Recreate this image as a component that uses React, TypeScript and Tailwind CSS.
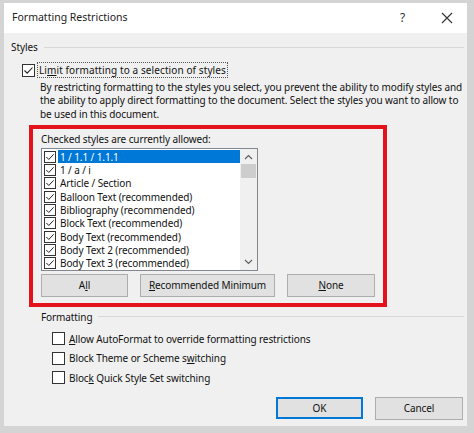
import React from "react";

const font = { fontFamily: '"Noto Sans", "Segoe UI", sans-serif' };

const styles = [
  "1 / 1.1 / 1.1.1",
  "1 / a / i",
  "Article / Section",
  "Balloon Text (recommended)",
  "Bibliography (recommended)",
  "Block Text (recommended)",
  "Body Text (recommended)",
  "Body Text 2 (recommended)",
  "Body Text 3 (recommended)",
];

function Check({ checked, size = 13 }: { checked?: boolean; size?: number }) {
  return (
    <span
      className="flex shrink-0 items-center justify-center border border-[#333] bg-white"
      style={{ width: size, height: size }}
    >
      {checked && (
        <svg width={size - 2} height={size - 2} viewBox="0 0 11 11">
          <path d="M1.5 5.5 L4.2 8.2 L9.5 2.5" fill="none" stroke="#222" strokeWidth="1.1" />
        </svg>
      )}
    </span>
  );
}

function Btn({ children, w, primary }: { children: React.ReactNode; w: number; primary?: boolean }) {
  return (
    <div
      className={`flex items-center justify-center bg-[#e1e1e1] text-[#111] ${
        primary ? "h-[22px] border-2 border-[#0078d7]" : "h-[23px] border border-[#adadad]"
      }`}
      style={{ width: w }}
    >
      {children}
    </div>
  );
}

export default function App() {
  return (
    <div className="h-[433px] w-[474px] bg-[#d4d4d4] pl-[4px] pr-[7px] pt-[3px] pb-[7px]" style={font}>
      <div className="flex h-full flex-col bg-[#f0f0f0] text-[10px] tracking-[-0.1px] text-[#111]">
        {/* title bar */}
        <div className="flex h-[30px] shrink-0 items-center bg-white pl-[8px] pr-[14px]">
          <span className="text-[10.5px] tracking-normal text-[#222]">Formatting Restrictions</span>
          <span className="ml-auto mr-[36px] text-[12px] text-[#333]">?</span>
          <svg width="12" height="12" viewBox="0 0 12 12">
            <path d="M1 1 L11 11 M11 1 L1 11" stroke="#333" strokeWidth="1.1" />
          </svg>
        </div>

        {/* Styles group */}
        <div className="mt-[7px] flex h-[14px] items-center pl-[7px] pr-[3px]">
          <span className="leading-none">Styles</span>
          <div className="ml-[6px] h-px flex-1 bg-[#d8d8d8]" />
        </div>

        <div className="ml-[18px] mt-[8px] flex h-[16px] items-center">
          <Check checked />
          <span className="ml-[2px] flex h-[16px] items-center border border-dotted border-[#555] px-[1px] leading-none tracking-[0.1px]">
            <span>
              Li<span className="underline">m</span>it formatting to a selection of styles
            </span>
          </span>
        </div>

        <div className="ml-[36px] mt-[3px] whitespace-nowrap leading-[13.33px]">
          <div>By restricting formatting to the styles you select, you prevent the ability to modify styles and</div>
          <div>the ability to apply direct formatting to the document. Select the styles you want to allow to</div>
          <div>be used in this document.</div>
        </div>

        {/* red highlight */}
        <div className="ml-[25px] mt-[4px] w-[358px] border-4 border-[#e3121b] pl-[8px] pr-[8px] pt-[3px] pb-[6px]">
          <div className="flex h-[14px] items-center leading-none">Checked styles are currently allowed:</div>
          <div className="mt-[2px] flex h-[123px] w-[217px] border border-[#828790] bg-white">
            <div className="flex flex-1 flex-col pt-[1px] pl-[2px]">
              {styles.map((s, i) => (
                <div key={s} className="flex h-[13.33px] items-center">
                  <Check checked size={12} />
                  <span
                    className={`ml-[2px] flex h-full flex-1 items-center pl-[2px] leading-none ${
                      i === 0 ? "bg-[#0078d7] text-white" : ""
                    }`}
                  >
                    {s}
                  </span>
                </div>
              ))}
            </div>
            <div className="flex w-[17px] flex-col items-center bg-[#f0f0f0]">
              <svg className="mt-[5px]" width="9" height="6" viewBox="0 0 9 6">
                <path d="M1 5 L4.5 1.5 L8 5" fill="none" stroke="#606060" strokeWidth="1.2" />
              </svg>
              <div className="mt-[4px] h-[14px] w-[15px] bg-[#cdcdcd]" />
              <svg className="mt-auto mb-[5px]" width="9" height="6" viewBox="0 0 9 6">
                <path d="M1 1 L4.5 4.5 L8 1" fill="none" stroke="#606060" strokeWidth="1.2" />
              </svg>
            </div>
          </div>
          <div className="mt-[3px] flex gap-[12px]">
            <Btn w={87}>
              <span>
                A<span className="underline">l</span>l
              </span>
            </Btn>
            <Btn w={135}>
              <span>
                <span className="underline">R</span>ecommended Minimum
              </span>
            </Btn>
            <Btn w={88}>
              <span>
                <span className="underline">N</span>one
              </span>
            </Btn>
          </div>
        </div>

        {/* Formatting group */}
        <div className="ml-[37px] mt-[3px] flex h-[14px] items-center pr-[3px]">
          <span className="leading-none">Formatting</span>
          <div className="ml-[6px] h-px flex-1 bg-[#d8d8d8]" />
        </div>
        <div className="ml-[48px] mt-[5px] flex flex-col">
          {[
            <>
              <span className="underline">A</span>llow AutoFormat to override formatting restrictions
            </>,
            <>
              Block Theme or Scheme s<span className="underline">w</span>itching
            </>,
            <>
              Bloc<span className="underline">k</span> Quick Style Set switching
            </>,
          ].map((label, i) => (
            <div key={i} className="flex h-[19.5px] items-center">
              <Check />
              <span className="ml-[4px] leading-none">{label}</span>
            </div>
          ))}
        </div>

        <div className="mt-auto mb-[6px] flex justify-end gap-[12px] pr-[4px]">
          <Btn w={87} primary>
            OK
          </Btn>
          <Btn w={88}>Cancel</Btn>
        </div>
      </div>
    </div>
  );
}
